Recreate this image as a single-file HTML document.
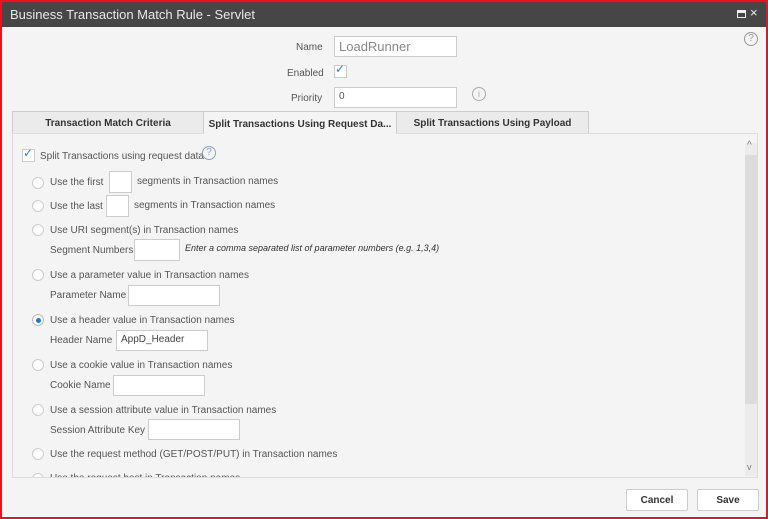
<!DOCTYPE html>
<html><head><style>
*{box-sizing:border-box;margin:0;padding:0}
body{width:768px;height:519px;overflow:hidden;background:#f4f4f4;font-family:"Liberation Sans",sans-serif;font-size:10px;color:#555;position:relative}
.frame{position:absolute;left:0;top:0;width:768px;height:519px;border:2px solid #e8141b;border-right-width:2px}
.a{position:absolute;white-space:nowrap}
.title{position:absolute;left:2px;top:2px;width:764px;height:25px;background:#464646;color:#e8e8e8;font-size:13px;padding:5px 0 0 8px}
.inp{position:absolute;background:#fff;border:1px solid #ccc}
.rad{position:absolute;width:12px;height:12px;border:1px solid #ccc;border-radius:50%;background:#fff}
.cb{position:absolute;width:13px;height:13px;border:1px solid #ccc;background:#fff}
.tab{position:absolute;top:111px;height:23px;border:1px solid #ccc;background:#ebebeb;font-weight:bold;font-size:10px;color:#333;text-align:center;padding-top:6px}
.btn{position:absolute;top:489px;height:22px;border:1px solid #ccc;background:#fff;border-radius:2px;font-weight:bold;color:#333;text-align:center;padding-top:5px}
.lab{font-size:10px;color:#555;margin-top:1px}
</style></head><body>
<div class="title">Business Transaction Match Rule - Servlet</div>
<div class="a" style="left:737px;top:10px;width:9px;height:8px;border:1px solid #eee;border-top-width:3px"></div>
<div class="a" style="left:750px;top:5px;color:#eee;font-size:13px">×</div>
<div class="a" style="left:744px;top:32px;width:14px;height:14px;border:1.5px solid #999;border-radius:50%;color:#999;font-size:10px;text-align:center;line-height:11px">?</div>

<div class="a lab" style="left:296px;top:41px">Name</div>
<div class="inp" style="left:334px;top:36px;width:123px;height:21px;font-size:13px;color:#888;padding:2px 4px">LoadRunner</div>
<div class="a lab" style="left:287px;top:67px">Enabled</div>
<div class="cb" style="left:334px;top:65px"></div>
<div class="a" style="left:335px;top:62px;color:#2b7fe0;font-size:12px">✓</div>
<div class="a lab" style="left:291px;top:92px">Priority</div>
<div class="inp" style="left:334px;top:87px;width:123px;height:21px;padding:3px 4px;color:#555">0</div>
<div class="a" style="left:472px;top:87px;width:14px;height:14px;border:1px solid #aaa;border-radius:50%;color:#aaa;font-size:9px;text-align:center;line-height:12px">i</div>

<div class="tab" style="left:12px;width:192px">Transaction Match Criteria</div>
<div class="tab" style="left:203px;width:194px;background:#f4f4f4;border-bottom-color:#f4f4f4;z-index:2;padding-top:7px">Split Transactions Using Request Da...</div>
<div class="tab" style="left:396px;width:193px">Split Transactions Using Payload</div>
<div class="a" style="left:12px;top:133px;width:746px;height:345px;border:1px solid #ddd;background:#f4f4f4"></div>
<div class="a" style="left:745px;top:143px;width:12px;height:333px;background:#ececec"></div>
<div class="a" style="left:745px;top:155px;width:12px;height:249px;background:#dcdcdc"></div>
<div class="a" style="left:747px;top:140px;color:#777;font-size:10px">^</div>
<div class="a" style="left:747px;top:462px;color:#777;font-size:9px">v</div>

<div class="cb" style="left:22px;top:149px"></div>
<div class="a" style="left:23px;top:146px;color:#2b7fe0;font-size:12px">✓</div>
<div class="a lab" style="left:40px;top:150px">Split Transactions using request data</div>
<div class="a" style="left:202px;top:146px;width:14px;height:14px;border:1px solid #8aa0c0;border-radius:50%;color:#8aa0c0;font-size:10px;text-align:center;line-height:12px">?</div>

<div class="rad" style="left:32px;top:177px"></div><div class="a lab" style="left:50px;top:176px">Use the first</div>
<div class="inp" style="left:109px;top:171px;width:23px;height:22px"></div><div class="a lab" style="left:137px;top:175px">segments in Transaction names</div>
<div class="rad" style="left:32px;top:200px"></div><div class="a lab" style="left:50px;top:200px">Use the last</div>
<div class="inp" style="left:106px;top:195px;width:23px;height:22px"></div><div class="a lab" style="left:134px;top:199px">segments in Transaction names</div>

<div class="rad" style="left:32px;top:224px"></div><div class="a lab" style="left:50px;top:224px">Use URI segment(s) in Transaction names</div>
<div class="a lab" style="left:50px;top:244px">Segment Numbers</div>
<div class="inp" style="left:134px;top:239px;width:46px;height:22px"></div>
<div class="a" style="left:185px;top:243px;font-style:italic;color:#333;font-size:9px">Enter a comma separated list of parameter numbers (e.g. 1,3,4)</div>

<div class="rad" style="left:32px;top:269px"></div><div class="a lab" style="left:50px;top:269px">Use a parameter value in Transaction names</div>
<div class="a lab" style="left:50px;top:289px">Parameter Name</div>
<div class="inp" style="left:128px;top:285px;width:92px;height:21px"></div>

<div class="rad" style="left:32px;top:314px;border-color:#bbb"></div><div class="a" style="left:35.5px;top:317.5px;width:5px;height:5px;border-radius:50%;background:#1a73e8"></div>
<div class="a lab" style="left:50px;top:314px">Use a header value in Transaction names</div>
<div class="a lab" style="left:50px;top:334px">Header Name</div>
<div class="inp" style="left:116px;top:330px;width:92px;height:21px;padding:3px 4px;color:#444">AppD_Header</div>

<div class="rad" style="left:32px;top:359px"></div><div class="a lab" style="left:50px;top:359px">Use a cookie value in Transaction names</div>
<div class="a lab" style="left:50px;top:379px">Cookie Name</div>
<div class="inp" style="left:113px;top:375px;width:92px;height:21px"></div>

<div class="rad" style="left:32px;top:404px"></div><div class="a lab" style="left:50px;top:404px">Use a session attribute value in Transaction names</div>
<div class="a lab" style="left:50px;top:424px">Session Attribute Key</div>
<div class="inp" style="left:148px;top:419px;width:92px;height:21px"></div>

<div class="rad" style="left:32px;top:448px"></div><div class="a lab" style="left:50px;top:448px">Use the request method (GET/POST/PUT) in Transaction names</div>
<div class="a" style="left:13px;top:470px;width:731px;height:7px;overflow:hidden"><div class="rad" style="left:19px;top:3px"></div><div class="a lab" style="left:37px;top:2px">Use the request host in Transaction names</div></div>

<div class="btn" style="left:626px;width:62px">Cancel</div>
<div class="btn" style="left:697px;width:62px">Save</div>
<div class="frame"></div>
</body></html>
